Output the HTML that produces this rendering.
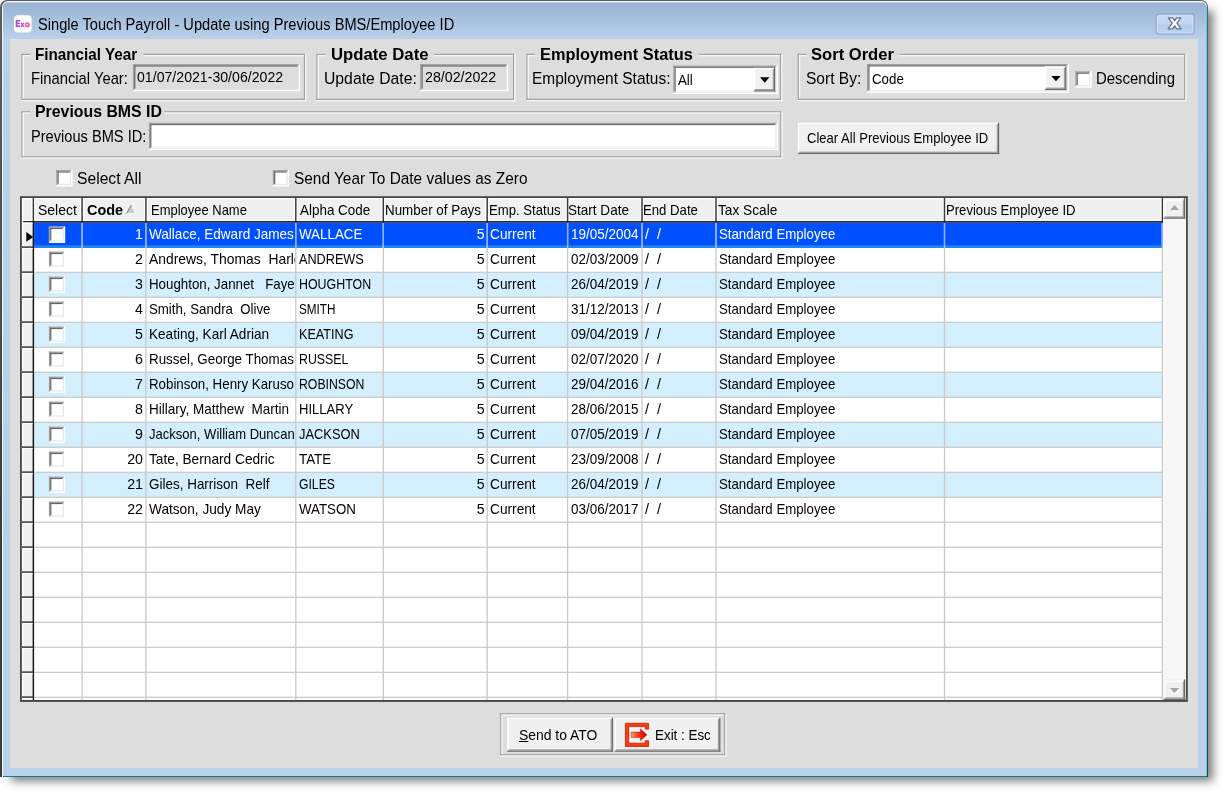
<!DOCTYPE html>
<html><head><meta charset="utf-8"><title>STP</title>
<style>
html,body{margin:0;padding:0;background:#fff;}
body{width:1227px;height:796px;overflow:hidden;position:relative;filter:blur(0.35px);font-family:"Liberation Sans",sans-serif;}
#win{position:absolute;left:0;top:0;width:1208px;height:777px;border-radius:7px 7px 0 0;background:linear-gradient(180deg,#5e5e5e 0,#3c3c3c 70%);box-shadow:8px 7px 10px -3px rgba(0,0,0,0.52);}
#frame{position:absolute;left:1.7px;top:1.1px;right:1.5px;bottom:0;border-radius:6px 6px 0 0;background:#f0f5fb;overflow:hidden;}
#frame i{position:absolute;display:block;}
#f-cr{right:0;top:3px;bottom:0;width:1px;background:#52d6f6;}
#f-cb{left:1.2px;right:0;bottom:0;height:1.3px;background:#52d6f6;border-bottom:1px solid #137c8c;}
#f-in{left:1.2px;top:1.3px;right:1px;bottom:1.2px;border-radius:5px 5px 0 0;background:linear-gradient(#d3e0f0 0,#98b3d3 1.6px,#b9d1ea 37px,#b9d1ea 100%);}
#art{position:absolute;left:0;top:0;}
.t{position:absolute;white-space:pre;line-height:1;color:#000;transform-origin:0 0;}

</style></head>
<body>
<div id="win"><div id="frame"><i id="f-cr"></i><i id="f-cb"></i><i id="f-in"></i></div></div>
<svg id="art" width="1227" height="796" viewBox="0 0 1227 796">
<defs>
<linearGradient id="gcap" x1="0" y1="0" x2="0" y2="1"><stop offset="0" stop-color="#98b3d3"/><stop offset="1" stop-color="#b9d1ea"/></linearGradient>
<linearGradient id="gx1" x1="0" y1="0" x2="0" y2="1"><stop offset="0" stop-color="#c9dcf3"/><stop offset="1" stop-color="#c0d6f0"/></linearGradient>
<linearGradient id="gx2" x1="0" y1="0" x2="0" y2="1"><stop offset="0" stop-color="#b3cbe9"/><stop offset="1" stop-color="#bdd4ee"/></linearGradient>
<linearGradient id="garrow" x1="0" y1="0" x2="1" y2="0"><stop offset="0" stop-color="#ff9a70"/><stop offset="0.45" stop-color="#f03810"/><stop offset="1" stop-color="#c00000"/></linearGradient>
<linearGradient id="gexo" x1="0" y1="0" x2="1" y2="0"><stop offset="0" stop-color="#9a3fc0"/><stop offset="1" stop-color="#ee1e9a"/></linearGradient>
</defs>
<rect x="10" y="39" width="1188" height="729" fill="#dddddd"/>
<rect x="14" y="15.2" width="17.6" height="17.4" rx="4" ry="4" fill="#ffffff"/>
<path d="M15.7 19.9 h4.5 v1.5 h-2.7 v1.3 h2.3 v1.4 h-2.3 v1.4 h2.8 v1.5 h-4.6 Z" fill="#a84fd0"/>
<path d="M21.0 22.9 L23.9 26.8 M23.9 22.9 L21.0 26.8" stroke="#cf43ba" stroke-width="1.25" fill="none"/>
<circle cx="27.3" cy="24.7" r="2.55" fill="#ee58ad"/>
<path d="M26.3 23.6 L28.6 24.7 L26.3 25.8 Z" fill="#ffffff"/>
<rect x="1155.6" y="13.6" width="39" height="21" rx="3" ry="3" fill="#8aa5c6"/>
<rect x="1156.7" y="14.7" width="36.8" height="18.8" rx="2" ry="2" fill="#d3e3f6"/>
<rect x="1157.7" y="15.7" width="34.8" height="8.6" fill="url(#gx1)"/>
<rect x="1157.7" y="24.3" width="34.8" height="8.3" fill="url(#gx2)"/>
<path d="M1168.3 17.9 L1172.6 17.9 L1174.6 20.7 L1176.6 17.9 L1180.9 17.9 L1176.9 23.2 L1181.1 28.8 L1176.7 28.8 L1174.6 25.8 L1172.5 28.8 L1168.1 28.8 L1172.3 23.2 Z" fill="#fbfcfe" stroke="#66758c" stroke-width="1.3" stroke-linejoin="round"/>
<rect x="21.4" y="53.8" width="1.25" height="46.2" fill="#a0a0a0"/>
<rect x="22.65" y="55.05" width="1.25" height="43.7" fill="#f8f8f8"/>
<rect x="21.4" y="98.75" width="283.7" height="1.25" fill="#a0a0a0"/>
<rect x="21.4" y="100" width="284.95" height="1.25" fill="#f8f8f8"/>
<rect x="303.85" y="53.8" width="1.25" height="46.2" fill="#a0a0a0"/>
<rect x="305.1" y="53.8" width="1.25" height="47.45" fill="#f8f8f8"/>
<rect x="21.4" y="53.8" width="283.7" height="1.25" fill="#a0a0a0"/>
<rect x="22.65" y="55.05" width="281.2" height="1.25" fill="#f8f8f8"/>
<rect x="30.1" y="53.3" width="113.5" height="3.5" fill="#dddddd"/>
<rect x="316.4" y="53.8" width="1.25" height="46.2" fill="#a0a0a0"/>
<rect x="317.65" y="55.05" width="1.25" height="43.7" fill="#f8f8f8"/>
<rect x="316.4" y="98.75" width="197.8" height="1.25" fill="#a0a0a0"/>
<rect x="316.4" y="100" width="199.05" height="1.25" fill="#f8f8f8"/>
<rect x="512.95" y="53.8" width="1.25" height="46.2" fill="#a0a0a0"/>
<rect x="514.2" y="53.8" width="1.25" height="47.45" fill="#f8f8f8"/>
<rect x="316.4" y="53.8" width="197.8" height="1.25" fill="#a0a0a0"/>
<rect x="317.65" y="55.05" width="195.3" height="1.25" fill="#f8f8f8"/>
<rect x="325.1" y="53.3" width="109.5" height="3.5" fill="#dddddd"/>
<rect x="526.4" y="53.8" width="1.25" height="46.2" fill="#a0a0a0"/>
<rect x="527.65" y="55.05" width="1.25" height="43.7" fill="#f8f8f8"/>
<rect x="526.4" y="98.75" width="254.8" height="1.25" fill="#a0a0a0"/>
<rect x="526.4" y="100" width="256.05" height="1.25" fill="#f8f8f8"/>
<rect x="779.95" y="53.8" width="1.25" height="46.2" fill="#a0a0a0"/>
<rect x="781.2" y="53.8" width="1.25" height="47.45" fill="#f8f8f8"/>
<rect x="526.4" y="53.8" width="254.8" height="1.25" fill="#a0a0a0"/>
<rect x="527.65" y="55.05" width="252.3" height="1.25" fill="#f8f8f8"/>
<rect x="535.1" y="53.3" width="164.1" height="3.5" fill="#dddddd"/>
<rect x="797.7" y="53.8" width="1.25" height="46.2" fill="#a0a0a0"/>
<rect x="798.95" y="55.05" width="1.25" height="43.7" fill="#f8f8f8"/>
<rect x="797.7" y="98.75" width="387.6" height="1.25" fill="#a0a0a0"/>
<rect x="797.7" y="100" width="388.85" height="1.25" fill="#f8f8f8"/>
<rect x="1184.05" y="53.8" width="1.25" height="46.2" fill="#a0a0a0"/>
<rect x="1185.3" y="53.8" width="1.25" height="47.45" fill="#f8f8f8"/>
<rect x="797.7" y="53.8" width="387.6" height="1.25" fill="#a0a0a0"/>
<rect x="798.95" y="55.05" width="385.1" height="1.25" fill="#f8f8f8"/>
<rect x="806.4" y="53.3" width="93.4" height="3.5" fill="#dddddd"/>
<rect x="21.4" y="111.2" width="1.25" height="46.3" fill="#a0a0a0"/>
<rect x="22.65" y="112.45" width="1.25" height="43.8" fill="#f8f8f8"/>
<rect x="21.4" y="156.25" width="760" height="1.25" fill="#a0a0a0"/>
<rect x="21.4" y="157.5" width="761.25" height="1.25" fill="#f8f8f8"/>
<rect x="780.15" y="111.2" width="1.25" height="46.3" fill="#a0a0a0"/>
<rect x="781.4" y="111.2" width="1.25" height="47.55" fill="#f8f8f8"/>
<rect x="21.4" y="111.2" width="760" height="1.25" fill="#a0a0a0"/>
<rect x="22.65" y="112.45" width="757.5" height="1.25" fill="#f8f8f8"/>
<rect x="30.1" y="110.7" width="133.9" height="3.5" fill="#dddddd"/>
<rect x="132.9" y="64.1" width="167.1" height="27.1" fill="#dddddd"/>
<rect x="132.9" y="89.95" width="167.1" height="1.25" fill="#ffffff"/>
<rect x="298.75" y="64.1" width="1.25" height="27.1" fill="#ffffff"/>
<rect x="134.15" y="88.7" width="164.6" height="1.25" fill="#e6e6e6"/>
<rect x="297.5" y="65.35" width="1.25" height="24.6" fill="#e6e6e6"/>
<rect x="132.9" y="64.1" width="165.85" height="1.25" fill="#a0a0a0"/>
<rect x="132.9" y="64.1" width="1.25" height="25.85" fill="#a0a0a0"/>
<rect x="134.15" y="65.35" width="163.35" height="1.25" fill="#6a6a6a"/>
<rect x="134.15" y="65.35" width="1.25" height="23.35" fill="#6a6a6a"/>
<rect x="420.2" y="64.1" width="88" height="27.1" fill="#dddddd"/>
<rect x="420.2" y="89.95" width="88" height="1.25" fill="#ffffff"/>
<rect x="506.95" y="64.1" width="1.25" height="27.1" fill="#ffffff"/>
<rect x="421.45" y="88.7" width="85.5" height="1.25" fill="#e6e6e6"/>
<rect x="505.7" y="65.35" width="1.25" height="24.6" fill="#e6e6e6"/>
<rect x="420.2" y="64.1" width="86.75" height="1.25" fill="#a0a0a0"/>
<rect x="420.2" y="64.1" width="1.25" height="25.85" fill="#a0a0a0"/>
<rect x="421.45" y="65.35" width="84.25" height="1.25" fill="#6a6a6a"/>
<rect x="421.45" y="65.35" width="1.25" height="23.35" fill="#6a6a6a"/>
<rect x="148.9" y="122.6" width="629" height="27.4" fill="#ffffff"/>
<rect x="148.9" y="148.75" width="629" height="1.25" fill="#ffffff"/>
<rect x="776.65" y="122.6" width="1.25" height="27.4" fill="#ffffff"/>
<rect x="150.15" y="147.5" width="626.5" height="1.25" fill="#e6e6e6"/>
<rect x="775.4" y="123.85" width="1.25" height="24.9" fill="#e6e6e6"/>
<rect x="148.9" y="122.6" width="627.75" height="1.25" fill="#a0a0a0"/>
<rect x="148.9" y="122.6" width="1.25" height="26.15" fill="#a0a0a0"/>
<rect x="150.15" y="123.85" width="625.25" height="1.25" fill="#6a6a6a"/>
<rect x="150.15" y="123.85" width="1.25" height="23.65" fill="#6a6a6a"/>
<rect x="673.2" y="65.4" width="104.5" height="28.6" fill="#ffffff"/>
<rect x="673.2" y="92.75" width="104.5" height="1.25" fill="#ffffff"/>
<rect x="776.45" y="65.4" width="1.25" height="28.6" fill="#ffffff"/>
<rect x="674.45" y="91.5" width="102" height="1.25" fill="#e6e6e6"/>
<rect x="775.2" y="66.65" width="1.25" height="26.1" fill="#e6e6e6"/>
<rect x="673.2" y="65.4" width="103.25" height="1.25" fill="#a0a0a0"/>
<rect x="673.2" y="65.4" width="1.25" height="27.35" fill="#a0a0a0"/>
<rect x="674.45" y="66.65" width="100.75" height="1.25" fill="#6a6a6a"/>
<rect x="674.45" y="66.65" width="1.25" height="24.85" fill="#6a6a6a"/>
<rect x="753.9" y="67.9" width="21.3" height="23.6" fill="#f0f0f0"/>
<rect x="753.9" y="67.9" width="20.05" height="1.25" fill="#ffffff"/>
<rect x="753.9" y="67.9" width="1.25" height="22.35" fill="#ffffff"/>
<rect x="755.15" y="89" width="18.8" height="1.25" fill="#a0a0a0"/>
<rect x="772.7" y="69.15" width="1.25" height="21.1" fill="#a0a0a0"/>
<rect x="753.9" y="90.25" width="21.3" height="1.25" fill="#6a6a6a"/>
<rect x="773.95" y="67.9" width="1.25" height="23.6" fill="#6a6a6a"/>
<path d="M760.05 77.3 L769.45 77.3 L764.75 82.7Z" fill="#000"/>
<rect x="867" y="64" width="201.9" height="28.6" fill="#ffffff"/>
<rect x="867" y="91.35" width="201.9" height="1.25" fill="#ffffff"/>
<rect x="1067.65" y="64" width="1.25" height="28.6" fill="#ffffff"/>
<rect x="868.25" y="90.1" width="199.4" height="1.25" fill="#e6e6e6"/>
<rect x="1066.4" y="65.25" width="1.25" height="26.1" fill="#e6e6e6"/>
<rect x="867" y="64" width="200.65" height="1.25" fill="#a0a0a0"/>
<rect x="867" y="64" width="1.25" height="27.35" fill="#a0a0a0"/>
<rect x="868.25" y="65.25" width="198.15" height="1.25" fill="#6a6a6a"/>
<rect x="868.25" y="65.25" width="1.25" height="24.85" fill="#6a6a6a"/>
<rect x="1045.1" y="66.5" width="21.3" height="23.6" fill="#f0f0f0"/>
<rect x="1045.1" y="66.5" width="20.05" height="1.25" fill="#ffffff"/>
<rect x="1045.1" y="66.5" width="1.25" height="22.35" fill="#ffffff"/>
<rect x="1046.35" y="87.6" width="18.8" height="1.25" fill="#a0a0a0"/>
<rect x="1063.9" y="67.75" width="1.25" height="21.1" fill="#a0a0a0"/>
<rect x="1045.1" y="88.85" width="21.3" height="1.25" fill="#6a6a6a"/>
<rect x="1065.15" y="66.5" width="1.25" height="23.6" fill="#6a6a6a"/>
<path d="M1051.25 75.9 L1060.65 75.9 L1055.95 81.3Z" fill="#000"/>
<rect x="1075.3" y="71.3" width="16.2" height="16.2" fill="#ffffff"/>
<rect x="1075.3" y="86.25" width="16.2" height="1.25" fill="#ffffff"/>
<rect x="1090.25" y="71.3" width="1.25" height="16.2" fill="#ffffff"/>
<rect x="1076.55" y="85" width="13.7" height="1.25" fill="#e8e8e8"/>
<rect x="1089" y="72.55" width="1.25" height="13.7" fill="#e8e8e8"/>
<rect x="1075.3" y="71.3" width="14.95" height="1.25" fill="#9c9c9c"/>
<rect x="1075.3" y="71.3" width="1.25" height="14.95" fill="#9c9c9c"/>
<rect x="1076.55" y="72.55" width="12.45" height="1.25" fill="#686868"/>
<rect x="1076.55" y="72.55" width="1.25" height="12.45" fill="#686868"/>
<rect x="56.2" y="170.1" width="16.2" height="16.2" fill="#ffffff"/>
<rect x="56.2" y="185.05" width="16.2" height="1.25" fill="#ffffff"/>
<rect x="71.15" y="170.1" width="1.25" height="16.2" fill="#ffffff"/>
<rect x="57.45" y="183.8" width="13.7" height="1.25" fill="#e8e8e8"/>
<rect x="69.9" y="171.35" width="1.25" height="13.7" fill="#e8e8e8"/>
<rect x="56.2" y="170.1" width="14.95" height="1.25" fill="#9c9c9c"/>
<rect x="56.2" y="170.1" width="1.25" height="14.95" fill="#9c9c9c"/>
<rect x="57.45" y="171.35" width="12.45" height="1.25" fill="#686868"/>
<rect x="57.45" y="171.35" width="1.25" height="12.45" fill="#686868"/>
<rect x="272.8" y="170.1" width="16.2" height="16.2" fill="#ffffff"/>
<rect x="272.8" y="185.05" width="16.2" height="1.25" fill="#ffffff"/>
<rect x="287.75" y="170.1" width="1.25" height="16.2" fill="#ffffff"/>
<rect x="274.05" y="183.8" width="13.7" height="1.25" fill="#e8e8e8"/>
<rect x="286.5" y="171.35" width="1.25" height="13.7" fill="#e8e8e8"/>
<rect x="272.8" y="170.1" width="14.95" height="1.25" fill="#9c9c9c"/>
<rect x="272.8" y="170.1" width="1.25" height="14.95" fill="#9c9c9c"/>
<rect x="274.05" y="171.35" width="12.45" height="1.25" fill="#686868"/>
<rect x="274.05" y="171.35" width="1.25" height="12.45" fill="#686868"/>
<rect x="797.9" y="122.8" width="201.3" height="31.3" fill="#f0f0f0"/>
<rect x="797.9" y="122.8" width="200.05" height="1.25" fill="#ffffff"/>
<rect x="797.9" y="122.8" width="1.25" height="30.05" fill="#ffffff"/>
<rect x="799.15" y="151.6" width="198.8" height="1.25" fill="#a0a0a0"/>
<rect x="996.7" y="124.05" width="1.25" height="28.8" fill="#a0a0a0"/>
<rect x="797.9" y="152.85" width="201.3" height="1.25" fill="#6a6a6a"/>
<rect x="997.95" y="122.8" width="1.25" height="31.3" fill="#6a6a6a"/>
<rect x="500.2" y="713.2" width="1.25" height="42.2" fill="#a0a0a0"/>
<rect x="501.45" y="714.45" width="1.25" height="39.7" fill="#f8f8f8"/>
<rect x="500.2" y="754.15" width="225.1" height="1.25" fill="#a0a0a0"/>
<rect x="500.2" y="755.4" width="226.35" height="1.25" fill="#f8f8f8"/>
<rect x="724.05" y="713.2" width="1.25" height="42.2" fill="#a0a0a0"/>
<rect x="725.3" y="713.2" width="1.25" height="43.45" fill="#f8f8f8"/>
<rect x="500.2" y="713.2" width="225.1" height="1.25" fill="#a0a0a0"/>
<rect x="501.45" y="714.45" width="222.6" height="1.25" fill="#f8f8f8"/>
<rect x="507.3" y="717.8" width="105.7" height="34" fill="#f0f0f0"/>
<rect x="507.3" y="717.8" width="104.45" height="1.25" fill="#ffffff"/>
<rect x="507.3" y="717.8" width="1.25" height="32.75" fill="#ffffff"/>
<rect x="508.55" y="749.3" width="103.2" height="1.25" fill="#a0a0a0"/>
<rect x="610.5" y="719.05" width="1.25" height="31.5" fill="#a0a0a0"/>
<rect x="507.3" y="750.55" width="105.7" height="1.25" fill="#6a6a6a"/>
<rect x="611.75" y="717.8" width="1.25" height="34" fill="#6a6a6a"/>
<rect x="614.7" y="717.8" width="105.7" height="34" fill="#f0f0f0"/>
<rect x="614.7" y="717.8" width="104.45" height="1.25" fill="#ffffff"/>
<rect x="614.7" y="717.8" width="1.25" height="32.75" fill="#ffffff"/>
<rect x="615.95" y="749.3" width="103.2" height="1.25" fill="#a0a0a0"/>
<rect x="717.9" y="719.05" width="1.25" height="31.5" fill="#a0a0a0"/>
<rect x="614.7" y="750.55" width="105.7" height="1.25" fill="#6a6a6a"/>
<rect x="719.15" y="717.8" width="1.25" height="34" fill="#6a6a6a"/>
<rect x="628" y="725.9" width="18" height="18" fill="#ebf5f5"/>
<path d="M625.4 723.3 h23.2 v5.8 h-3.3 v-2.5 h-16.6 v16.6 h16.6 v-2.5 h3.3 v5.8 h-23.2 Z" fill="#f4400c" stroke="#d41400" stroke-width="0.8"/>
<path d="M631.2 732 h9.2 v-3.2 l6.6 6.0 l-6.6 6.0 v-3.2 h-9.2 Z" fill="url(#garrow)" stroke="#d01800" stroke-width="0.5"/>
<rect x="20" y="196.2" width="1167.8" height="505.7" fill="#484848"/>
<rect x="21.95" y="198.15" width="1163.9" height="501.8" fill="#ffffff"/>
<rect x="34.1" y="222.6" width="1127.65" height="25" fill="#0050ff"/>
<rect x="34.1" y="272.6" width="1127.65" height="25" fill="#d3effd"/>
<rect x="34.1" y="322.6" width="1127.65" height="25" fill="#d3effd"/>
<rect x="34.1" y="372.6" width="1127.65" height="25" fill="#d3effd"/>
<rect x="34.1" y="422.6" width="1127.65" height="25" fill="#d3effd"/>
<rect x="34.1" y="472.6" width="1127.65" height="25" fill="#d3effd"/>
<rect x="34.1" y="245.3" width="1128.95" height="2.65" fill="#1f86ee"/>
<rect x="34.1" y="271.65" width="1128.95" height="1.3" fill="#cbcbcb"/>
<rect x="34.1" y="296.65" width="1128.95" height="1.3" fill="#cbcbcb"/>
<rect x="34.1" y="321.65" width="1128.95" height="1.3" fill="#cbcbcb"/>
<rect x="34.1" y="346.65" width="1128.95" height="1.3" fill="#cbcbcb"/>
<rect x="34.1" y="371.65" width="1128.95" height="1.3" fill="#cbcbcb"/>
<rect x="34.1" y="396.65" width="1128.95" height="1.3" fill="#cbcbcb"/>
<rect x="34.1" y="421.65" width="1128.95" height="1.3" fill="#cbcbcb"/>
<rect x="34.1" y="446.65" width="1128.95" height="1.3" fill="#cbcbcb"/>
<rect x="34.1" y="471.65" width="1128.95" height="1.3" fill="#cbcbcb"/>
<rect x="34.1" y="496.65" width="1128.95" height="1.3" fill="#cbcbcb"/>
<rect x="34.1" y="521.65" width="1128.95" height="1.3" fill="#cbcbcb"/>
<rect x="34.1" y="546.65" width="1128.95" height="1.3" fill="#cbcbcb"/>
<rect x="34.1" y="571.65" width="1128.95" height="1.3" fill="#cbcbcb"/>
<rect x="34.1" y="596.65" width="1128.95" height="1.3" fill="#cbcbcb"/>
<rect x="34.1" y="621.65" width="1128.95" height="1.3" fill="#cbcbcb"/>
<rect x="34.1" y="646.65" width="1128.95" height="1.3" fill="#cbcbcb"/>
<rect x="34.1" y="671.65" width="1128.95" height="1.3" fill="#cbcbcb"/>
<rect x="34.1" y="696.65" width="1128.95" height="1.3" fill="#cbcbcb"/>
<rect x="81.45" y="222.6" width="1.3" height="477.35" fill="#c9c9c9"/>
<rect x="81.45" y="222.6" width="1.3" height="23.8" fill="#8fb0f2"/>
<rect x="145.25" y="222.6" width="1.3" height="477.35" fill="#c9c9c9"/>
<rect x="145.25" y="222.6" width="1.3" height="23.8" fill="#8fb0f2"/>
<rect x="295.15" y="222.6" width="1.3" height="477.35" fill="#c9c9c9"/>
<rect x="295.15" y="222.6" width="1.3" height="23.8" fill="#8fb0f2"/>
<rect x="382.65" y="222.6" width="1.3" height="477.35" fill="#c9c9c9"/>
<rect x="382.65" y="222.6" width="1.3" height="23.8" fill="#8fb0f2"/>
<rect x="486.55" y="222.6" width="1.3" height="477.35" fill="#c9c9c9"/>
<rect x="486.55" y="222.6" width="1.3" height="23.8" fill="#8fb0f2"/>
<rect x="566.95" y="222.6" width="1.3" height="477.35" fill="#c9c9c9"/>
<rect x="566.95" y="222.6" width="1.3" height="23.8" fill="#8fb0f2"/>
<rect x="641.35" y="222.6" width="1.3" height="477.35" fill="#c9c9c9"/>
<rect x="641.35" y="222.6" width="1.3" height="23.8" fill="#8fb0f2"/>
<rect x="715.35" y="222.6" width="1.3" height="477.35" fill="#c9c9c9"/>
<rect x="715.35" y="222.6" width="1.3" height="23.8" fill="#8fb0f2"/>
<rect x="943.85" y="222.6" width="1.3" height="477.35" fill="#c9c9c9"/>
<rect x="943.85" y="222.6" width="1.3" height="23.8" fill="#8fb0f2"/>
<rect x="1161.75" y="222.6" width="1.3" height="477.35" fill="#c9c9c9"/>
<rect x="1161.75" y="222.6" width="1.3" height="23.8" fill="#8fb0f2"/>
<rect x="21.95" y="198.15" width="1140.45" height="22.95" fill="#f0f0f0"/>
<rect x="21.95" y="198.15" width="1140.45" height="1.3" fill="#ffffff"/>
<rect x="21.95" y="220.1" width="1140.45" height="1" fill="#fbfbfb"/>
<rect x="31.4" y="198.15" width="4" height="22.95" fill="#ffffff"/>
<rect x="32.6" y="197.85" width="1.5" height="24.75" fill="#3c3c3c"/>
<rect x="80.15" y="198.15" width="4" height="22.95" fill="#ffffff"/>
<rect x="81.35" y="197.85" width="1.5" height="24.75" fill="#3c3c3c"/>
<rect x="143.95" y="198.15" width="4" height="22.95" fill="#ffffff"/>
<rect x="145.15" y="197.85" width="1.5" height="24.75" fill="#3c3c3c"/>
<rect x="293.85" y="198.15" width="4" height="22.95" fill="#ffffff"/>
<rect x="295.05" y="197.85" width="1.5" height="24.75" fill="#3c3c3c"/>
<rect x="381.35" y="198.15" width="4" height="22.95" fill="#ffffff"/>
<rect x="382.55" y="197.85" width="1.5" height="24.75" fill="#3c3c3c"/>
<rect x="485.25" y="198.15" width="4" height="22.95" fill="#ffffff"/>
<rect x="486.45" y="197.85" width="1.5" height="24.75" fill="#3c3c3c"/>
<rect x="565.65" y="198.15" width="4" height="22.95" fill="#ffffff"/>
<rect x="566.85" y="197.85" width="1.5" height="24.75" fill="#3c3c3c"/>
<rect x="640.05" y="198.15" width="4" height="22.95" fill="#ffffff"/>
<rect x="641.25" y="197.85" width="1.5" height="24.75" fill="#3c3c3c"/>
<rect x="714.05" y="198.15" width="4" height="22.95" fill="#ffffff"/>
<rect x="715.25" y="197.85" width="1.5" height="24.75" fill="#3c3c3c"/>
<rect x="942.55" y="198.15" width="4" height="22.95" fill="#ffffff"/>
<rect x="943.75" y="197.85" width="1.5" height="24.75" fill="#3c3c3c"/>
<rect x="1160.45" y="198.15" width="4" height="22.95" fill="#ffffff"/>
<rect x="1161.65" y="197.85" width="1.5" height="24.75" fill="#3c3c3c"/>
<rect x="21.95" y="221.1" width="1141.2" height="1.5" fill="#141414"/>
<rect x="21.95" y="222.6" width="10.65" height="477.35" fill="#f0f0f0"/>
<rect x="21.95" y="198.15" width="1.2" height="501.8" fill="#ffffff"/>
<rect x="32.6" y="221.1" width="1.5" height="478.85" fill="#141414"/>
<rect x="21.95" y="246.4" width="11.4" height="1.5" fill="#2e2e2e"/>
<rect x="21.95" y="247.9" width="10.65" height="1.2" fill="#ffffff"/>
<rect x="21.95" y="271.4" width="11.4" height="1.5" fill="#2e2e2e"/>
<rect x="21.95" y="272.9" width="10.65" height="1.2" fill="#ffffff"/>
<rect x="21.95" y="296.4" width="11.4" height="1.5" fill="#2e2e2e"/>
<rect x="21.95" y="297.9" width="10.65" height="1.2" fill="#ffffff"/>
<rect x="21.95" y="321.4" width="11.4" height="1.5" fill="#2e2e2e"/>
<rect x="21.95" y="322.9" width="10.65" height="1.2" fill="#ffffff"/>
<rect x="21.95" y="346.4" width="11.4" height="1.5" fill="#2e2e2e"/>
<rect x="21.95" y="347.9" width="10.65" height="1.2" fill="#ffffff"/>
<rect x="21.95" y="371.4" width="11.4" height="1.5" fill="#2e2e2e"/>
<rect x="21.95" y="372.9" width="10.65" height="1.2" fill="#ffffff"/>
<rect x="21.95" y="396.4" width="11.4" height="1.5" fill="#2e2e2e"/>
<rect x="21.95" y="397.9" width="10.65" height="1.2" fill="#ffffff"/>
<rect x="21.95" y="421.4" width="11.4" height="1.5" fill="#2e2e2e"/>
<rect x="21.95" y="422.9" width="10.65" height="1.2" fill="#ffffff"/>
<rect x="21.95" y="446.4" width="11.4" height="1.5" fill="#2e2e2e"/>
<rect x="21.95" y="447.9" width="10.65" height="1.2" fill="#ffffff"/>
<rect x="21.95" y="471.4" width="11.4" height="1.5" fill="#2e2e2e"/>
<rect x="21.95" y="472.9" width="10.65" height="1.2" fill="#ffffff"/>
<rect x="21.95" y="496.4" width="11.4" height="1.5" fill="#2e2e2e"/>
<rect x="21.95" y="497.9" width="10.65" height="1.2" fill="#ffffff"/>
<rect x="21.95" y="521.4" width="11.4" height="1.5" fill="#2e2e2e"/>
<rect x="21.95" y="522.9" width="10.65" height="1.2" fill="#ffffff"/>
<rect x="21.95" y="546.4" width="11.4" height="1.5" fill="#2e2e2e"/>
<rect x="21.95" y="547.9" width="10.65" height="1.2" fill="#ffffff"/>
<rect x="21.95" y="571.4" width="11.4" height="1.5" fill="#2e2e2e"/>
<rect x="21.95" y="572.9" width="10.65" height="1.2" fill="#ffffff"/>
<rect x="21.95" y="596.4" width="11.4" height="1.5" fill="#2e2e2e"/>
<rect x="21.95" y="597.9" width="10.65" height="1.2" fill="#ffffff"/>
<rect x="21.95" y="621.4" width="11.4" height="1.5" fill="#2e2e2e"/>
<rect x="21.95" y="622.9" width="10.65" height="1.2" fill="#ffffff"/>
<rect x="21.95" y="646.4" width="11.4" height="1.5" fill="#2e2e2e"/>
<rect x="21.95" y="647.9" width="10.65" height="1.2" fill="#ffffff"/>
<rect x="21.95" y="671.4" width="11.4" height="1.5" fill="#2e2e2e"/>
<rect x="21.95" y="672.9" width="10.65" height="1.2" fill="#ffffff"/>
<rect x="21.95" y="696.4" width="11.4" height="1.5" fill="#2e2e2e"/>
<rect x="21.95" y="697.9" width="10.65" height="1.2" fill="#ffffff"/>
<rect x="21.95" y="222.6" width="10.65" height="1.2" fill="#ffffff"/>
<path d="M26.3 232.0 L33.2 236.9 L26.3 241.8 Z" fill="#000"/>
<path d="M126.2 213.4 L130.9 205.0 L135.0 213.4 Z" fill="#cdcdcd"/>
<path d="M126.0 213.6 L130.6 205.0 L131.6 205.4 L127.2 213.6 Z" fill="#8c8c8c"/>
<rect x="127" y="213.2" width="8.4" height="1" fill="#fafafa"/>
<rect x="48.9" y="226.6" width="16.2" height="16.2" fill="#ffffff"/>
<rect x="48.9" y="241.55" width="16.2" height="1.25" fill="#ffffff"/>
<rect x="63.85" y="226.6" width="1.25" height="16.2" fill="#ffffff"/>
<rect x="50.15" y="240.3" width="13.7" height="1.25" fill="#e8e8e8"/>
<rect x="62.6" y="227.85" width="1.25" height="13.7" fill="#e8e8e8"/>
<rect x="48.9" y="226.6" width="14.95" height="1.25" fill="#9c9c9c"/>
<rect x="48.9" y="226.6" width="1.25" height="14.95" fill="#9c9c9c"/>
<rect x="50.15" y="227.85" width="12.45" height="1.25" fill="#686868"/>
<rect x="50.15" y="227.85" width="1.25" height="12.45" fill="#686868"/>
<rect x="48.9" y="251.6" width="16.2" height="16.2" fill="#ffffff"/>
<rect x="48.9" y="266.55" width="16.2" height="1.25" fill="#ffffff"/>
<rect x="63.85" y="251.6" width="1.25" height="16.2" fill="#ffffff"/>
<rect x="50.15" y="265.3" width="13.7" height="1.25" fill="#e8e8e8"/>
<rect x="62.6" y="252.85" width="1.25" height="13.7" fill="#e8e8e8"/>
<rect x="48.9" y="251.6" width="14.95" height="1.25" fill="#9c9c9c"/>
<rect x="48.9" y="251.6" width="1.25" height="14.95" fill="#9c9c9c"/>
<rect x="50.15" y="252.85" width="12.45" height="1.25" fill="#686868"/>
<rect x="50.15" y="252.85" width="1.25" height="12.45" fill="#686868"/>
<rect x="48.9" y="276.6" width="16.2" height="16.2" fill="#ffffff"/>
<rect x="48.9" y="291.55" width="16.2" height="1.25" fill="#ffffff"/>
<rect x="63.85" y="276.6" width="1.25" height="16.2" fill="#ffffff"/>
<rect x="50.15" y="290.3" width="13.7" height="1.25" fill="#e8e8e8"/>
<rect x="62.6" y="277.85" width="1.25" height="13.7" fill="#e8e8e8"/>
<rect x="48.9" y="276.6" width="14.95" height="1.25" fill="#9c9c9c"/>
<rect x="48.9" y="276.6" width="1.25" height="14.95" fill="#9c9c9c"/>
<rect x="50.15" y="277.85" width="12.45" height="1.25" fill="#686868"/>
<rect x="50.15" y="277.85" width="1.25" height="12.45" fill="#686868"/>
<rect x="48.9" y="301.6" width="16.2" height="16.2" fill="#ffffff"/>
<rect x="48.9" y="316.55" width="16.2" height="1.25" fill="#ffffff"/>
<rect x="63.85" y="301.6" width="1.25" height="16.2" fill="#ffffff"/>
<rect x="50.15" y="315.3" width="13.7" height="1.25" fill="#e8e8e8"/>
<rect x="62.6" y="302.85" width="1.25" height="13.7" fill="#e8e8e8"/>
<rect x="48.9" y="301.6" width="14.95" height="1.25" fill="#9c9c9c"/>
<rect x="48.9" y="301.6" width="1.25" height="14.95" fill="#9c9c9c"/>
<rect x="50.15" y="302.85" width="12.45" height="1.25" fill="#686868"/>
<rect x="50.15" y="302.85" width="1.25" height="12.45" fill="#686868"/>
<rect x="48.9" y="326.6" width="16.2" height="16.2" fill="#ffffff"/>
<rect x="48.9" y="341.55" width="16.2" height="1.25" fill="#ffffff"/>
<rect x="63.85" y="326.6" width="1.25" height="16.2" fill="#ffffff"/>
<rect x="50.15" y="340.3" width="13.7" height="1.25" fill="#e8e8e8"/>
<rect x="62.6" y="327.85" width="1.25" height="13.7" fill="#e8e8e8"/>
<rect x="48.9" y="326.6" width="14.95" height="1.25" fill="#9c9c9c"/>
<rect x="48.9" y="326.6" width="1.25" height="14.95" fill="#9c9c9c"/>
<rect x="50.15" y="327.85" width="12.45" height="1.25" fill="#686868"/>
<rect x="50.15" y="327.85" width="1.25" height="12.45" fill="#686868"/>
<rect x="48.9" y="351.6" width="16.2" height="16.2" fill="#ffffff"/>
<rect x="48.9" y="366.55" width="16.2" height="1.25" fill="#ffffff"/>
<rect x="63.85" y="351.6" width="1.25" height="16.2" fill="#ffffff"/>
<rect x="50.15" y="365.3" width="13.7" height="1.25" fill="#e8e8e8"/>
<rect x="62.6" y="352.85" width="1.25" height="13.7" fill="#e8e8e8"/>
<rect x="48.9" y="351.6" width="14.95" height="1.25" fill="#9c9c9c"/>
<rect x="48.9" y="351.6" width="1.25" height="14.95" fill="#9c9c9c"/>
<rect x="50.15" y="352.85" width="12.45" height="1.25" fill="#686868"/>
<rect x="50.15" y="352.85" width="1.25" height="12.45" fill="#686868"/>
<rect x="48.9" y="376.6" width="16.2" height="16.2" fill="#ffffff"/>
<rect x="48.9" y="391.55" width="16.2" height="1.25" fill="#ffffff"/>
<rect x="63.85" y="376.6" width="1.25" height="16.2" fill="#ffffff"/>
<rect x="50.15" y="390.3" width="13.7" height="1.25" fill="#e8e8e8"/>
<rect x="62.6" y="377.85" width="1.25" height="13.7" fill="#e8e8e8"/>
<rect x="48.9" y="376.6" width="14.95" height="1.25" fill="#9c9c9c"/>
<rect x="48.9" y="376.6" width="1.25" height="14.95" fill="#9c9c9c"/>
<rect x="50.15" y="377.85" width="12.45" height="1.25" fill="#686868"/>
<rect x="50.15" y="377.85" width="1.25" height="12.45" fill="#686868"/>
<rect x="48.9" y="401.6" width="16.2" height="16.2" fill="#ffffff"/>
<rect x="48.9" y="416.55" width="16.2" height="1.25" fill="#ffffff"/>
<rect x="63.85" y="401.6" width="1.25" height="16.2" fill="#ffffff"/>
<rect x="50.15" y="415.3" width="13.7" height="1.25" fill="#e8e8e8"/>
<rect x="62.6" y="402.85" width="1.25" height="13.7" fill="#e8e8e8"/>
<rect x="48.9" y="401.6" width="14.95" height="1.25" fill="#9c9c9c"/>
<rect x="48.9" y="401.6" width="1.25" height="14.95" fill="#9c9c9c"/>
<rect x="50.15" y="402.85" width="12.45" height="1.25" fill="#686868"/>
<rect x="50.15" y="402.85" width="1.25" height="12.45" fill="#686868"/>
<rect x="48.9" y="426.6" width="16.2" height="16.2" fill="#ffffff"/>
<rect x="48.9" y="441.55" width="16.2" height="1.25" fill="#ffffff"/>
<rect x="63.85" y="426.6" width="1.25" height="16.2" fill="#ffffff"/>
<rect x="50.15" y="440.3" width="13.7" height="1.25" fill="#e8e8e8"/>
<rect x="62.6" y="427.85" width="1.25" height="13.7" fill="#e8e8e8"/>
<rect x="48.9" y="426.6" width="14.95" height="1.25" fill="#9c9c9c"/>
<rect x="48.9" y="426.6" width="1.25" height="14.95" fill="#9c9c9c"/>
<rect x="50.15" y="427.85" width="12.45" height="1.25" fill="#686868"/>
<rect x="50.15" y="427.85" width="1.25" height="12.45" fill="#686868"/>
<rect x="48.9" y="451.6" width="16.2" height="16.2" fill="#ffffff"/>
<rect x="48.9" y="466.55" width="16.2" height="1.25" fill="#ffffff"/>
<rect x="63.85" y="451.6" width="1.25" height="16.2" fill="#ffffff"/>
<rect x="50.15" y="465.3" width="13.7" height="1.25" fill="#e8e8e8"/>
<rect x="62.6" y="452.85" width="1.25" height="13.7" fill="#e8e8e8"/>
<rect x="48.9" y="451.6" width="14.95" height="1.25" fill="#9c9c9c"/>
<rect x="48.9" y="451.6" width="1.25" height="14.95" fill="#9c9c9c"/>
<rect x="50.15" y="452.85" width="12.45" height="1.25" fill="#686868"/>
<rect x="50.15" y="452.85" width="1.25" height="12.45" fill="#686868"/>
<rect x="48.9" y="476.6" width="16.2" height="16.2" fill="#ffffff"/>
<rect x="48.9" y="491.55" width="16.2" height="1.25" fill="#ffffff"/>
<rect x="63.85" y="476.6" width="1.25" height="16.2" fill="#ffffff"/>
<rect x="50.15" y="490.3" width="13.7" height="1.25" fill="#e8e8e8"/>
<rect x="62.6" y="477.85" width="1.25" height="13.7" fill="#e8e8e8"/>
<rect x="48.9" y="476.6" width="14.95" height="1.25" fill="#9c9c9c"/>
<rect x="48.9" y="476.6" width="1.25" height="14.95" fill="#9c9c9c"/>
<rect x="50.15" y="477.85" width="12.45" height="1.25" fill="#686868"/>
<rect x="50.15" y="477.85" width="1.25" height="12.45" fill="#686868"/>
<rect x="48.9" y="501.6" width="16.2" height="16.2" fill="#ffffff"/>
<rect x="48.9" y="516.55" width="16.2" height="1.25" fill="#ffffff"/>
<rect x="63.85" y="501.6" width="1.25" height="16.2" fill="#ffffff"/>
<rect x="50.15" y="515.3" width="13.7" height="1.25" fill="#e8e8e8"/>
<rect x="62.6" y="502.85" width="1.25" height="13.7" fill="#e8e8e8"/>
<rect x="48.9" y="501.6" width="14.95" height="1.25" fill="#9c9c9c"/>
<rect x="48.9" y="501.6" width="1.25" height="14.95" fill="#9c9c9c"/>
<rect x="50.15" y="502.85" width="12.45" height="1.25" fill="#686868"/>
<rect x="50.15" y="502.85" width="1.25" height="12.45" fill="#686868"/>
<rect x="1163.15" y="198.15" width="22.7" height="501.8" fill="#f7f7f7"/>
<rect x="1163.65" y="198.15" width="21.6" height="20.65" fill="#f0f0f0"/>
<rect x="1163.65" y="198.15" width="20.35" height="1.25" fill="#f0f0f0"/>
<rect x="1163.65" y="198.15" width="1.25" height="19.4" fill="#f0f0f0"/>
<rect x="1164.9" y="216.3" width="19.1" height="1.25" fill="#a0a0a0"/>
<rect x="1182.75" y="199.4" width="1.25" height="18.15" fill="#a0a0a0"/>
<rect x="1163.65" y="217.55" width="21.6" height="1.25" fill="#6a6a6a"/>
<rect x="1184" y="198.15" width="1.25" height="20.65" fill="#6a6a6a"/>
<rect x="1164.4" y="199.4" width="18.95" height="1.25" fill="#ffffff"/>
<rect x="1164.4" y="199.4" width="1.25" height="16.9" fill="#ffffff"/>
<rect x="1163.65" y="679.4" width="21.6" height="20.55" fill="#f0f0f0"/>
<rect x="1163.65" y="679.4" width="20.35" height="1.25" fill="#f0f0f0"/>
<rect x="1163.65" y="679.4" width="1.25" height="19.3" fill="#f0f0f0"/>
<rect x="1164.9" y="697.45" width="19.1" height="1.25" fill="#a0a0a0"/>
<rect x="1182.75" y="680.65" width="1.25" height="18.05" fill="#a0a0a0"/>
<rect x="1163.65" y="698.7" width="21.6" height="1.25" fill="#6a6a6a"/>
<rect x="1184" y="679.4" width="1.25" height="20.55" fill="#6a6a6a"/>
<rect x="1164.4" y="680.65" width="18.95" height="1.25" fill="#ffffff"/>
<rect x="1164.4" y="680.65" width="1.25" height="16.8" fill="#ffffff"/>
<path d="M1171 211.3 L1180.4 211.3 L1175.7 206.1Z" fill="#ffffff"/>
<path d="M1169.9 210.2 L1179.3 210.2 L1174.6 205Z" fill="#a6a6a6"/>
<path d="M1171 689 L1180.4 689 L1175.7 694.2Z" fill="#ffffff"/>
<path d="M1169.9 687.9 L1179.3 687.9 L1174.6 693.1Z" fill="#a6a6a6"/>
</svg>
<span class="t" id="t0" style="top:17.23px;font-size:15.8px;left:37.84px;transform:scaleX(0.9264);">Single Touch Payroll - Update using Previous BMS/Employee ID</span>
<span class="t" id="t1" style="top:47.01px;font-size:15.7px;left:34.61px;font-weight:bold;transform:scaleX(0.9703);">Financial Year</span>
<span class="t" id="t2" style="top:47.01px;font-size:15.7px;left:331.15px;font-weight:bold;transform:scaleX(1.0654);">Update Date</span>
<span class="t" id="t3" style="top:47.01px;font-size:15.7px;left:539.86px;font-weight:bold;transform:scaleX(1.0434);">Employment Status</span>
<span class="t" id="t4" style="top:47.01px;font-size:15.7px;left:810.75px;font-weight:bold;transform:scaleX(1.0568);">Sort Order</span>
<span class="t" id="t5" style="top:104.11px;font-size:15.7px;left:35.29px;font-weight:bold;transform:scaleX(1.0110);">Previous BMS ID</span>
<span class="t" id="t6" style="top:70.20px;font-size:16.3px;left:31.33px;transform:scaleX(0.9069);">Financial Year:</span>
<span class="t" id="t7" style="top:70.20px;font-size:16.3px;left:323.79px;transform:scaleX(0.9668);">Update Date:</span>
<span class="t" id="t8" style="top:70.20px;font-size:16.3px;left:532.30px;transform:scaleX(0.9503);">Employment Status:</span>
<span class="t" id="t9" style="top:70.20px;font-size:16.3px;left:806.30px;transform:scaleX(0.9542);">Sort By:</span>
<span class="t" id="t10" style="top:70.20px;font-size:16.3px;left:1096.13px;transform:scaleX(0.9182);">Descending</span>
<span class="t" id="t11" style="top:128.40px;font-size:16.3px;left:30.84px;transform:scaleX(0.8979);">Previous BMS ID:</span>
<span class="t" id="t12" style="top:170.00px;font-size:16.3px;left:77.29px;transform:scaleX(0.9624);">Select All</span>
<span class="t" id="t13" style="top:170.00px;font-size:16.3px;left:293.81px;transform:scaleX(0.9460);">Send Year To Date values as Zero</span>
<span class="t" id="t14" style="top:70.03px;font-size:14.5px;left:136.86px;transform:scaleX(0.9741);">01/07/2021-30/06/2022</span>
<span class="t" id="t15" style="top:70.03px;font-size:14.5px;left:424.56px;transform:scaleX(0.9797);">28/02/2022</span>
<span class="t" id="t16" style="top:72.90px;font-size:14.3px;left:678.10px;transform:scaleX(0.9305);">All</span>
<span class="t" id="t17" style="top:71.70px;font-size:14.3px;left:871.90px;transform:scaleX(0.9298);">Code</span>
<span class="t" id="t18" style="top:130.93px;font-size:14.5px;left:806.71px;transform:scaleX(0.8998);">Clear All Previous Employee ID</span>
<span class="t" id="t19" style="top:727.93px;font-size:14.5px;left:519.37px;transform:scaleX(0.9586);"><u>S</u>end to ATO</span>
<span class="t" id="t20" style="top:727.93px;font-size:14.5px;left:655.40px;transform:scaleX(0.9234);">Exit : Esc</span>
<span class="t" id="t21" style="top:203.08px;font-size:14.2px;left:38.37px;transform:scaleX(0.9858);">Select</span>
<span class="t" id="t22" style="top:203.08px;font-size:14.2px;left:87.35px;font-weight:bold;transform:scaleX(1.0172);">Code</span>
<span class="t" id="t23" style="top:203.08px;font-size:14.2px;left:151.12px;transform:scaleX(0.9141);">Employee Name</span>
<span class="t" id="t24" style="top:203.08px;font-size:14.2px;left:299.99px;transform:scaleX(0.9477);">Alpha Code</span>
<span class="t" id="t25" style="top:203.08px;font-size:14.2px;left:385.20px;transform:scaleX(0.9436);">Number of Pays</span>
<span class="t" id="t26" style="top:203.08px;font-size:14.2px;left:488.61px;transform:scaleX(0.9262);">Emp. Status</span>
<span class="t" id="t27" style="top:203.08px;font-size:14.2px;left:568.39px;transform:scaleX(0.9546);">Start Date</span>
<span class="t" id="t28" style="top:203.08px;font-size:14.2px;left:643.41px;transform:scaleX(0.9277);">End Date</span>
<span class="t" id="t29" style="top:203.08px;font-size:14.2px;left:717.68px;transform:scaleX(0.9636);">Tax Scale</span>
<span class="t" id="t30" style="top:203.08px;font-size:14.2px;left:946.41px;transform:scaleX(0.9232);">Previous Employee ID</span>
<span class="t" id="t31" style="top:227.38px;font-size:14.2px;right:1084.06px;transform-origin:100% 0;color:#fff;">1</span>
<span class="t" id="t32" style="top:227.38px;font-size:14.2px;left:148.99px;color:#fff;transform:scaleX(0.9553);">Wallace, Edward James</span>
<span class="t" id="t33" style="top:227.38px;font-size:14.2px;left:299.40px;color:#fff;transform:scaleX(0.9420);">WALLACE</span>
<span class="t" id="t34" style="top:227.38px;font-size:14.2px;right:742.36px;transform-origin:100% 0;color:#fff;">5</span>
<span class="t" id="t35" style="top:227.38px;font-size:14.2px;left:489.98px;color:#fff;transform:scaleX(0.9655);">Current</span>
<span class="t" id="t36" style="top:227.38px;font-size:14.2px;left:570.59px;color:#fff;transform:scaleX(0.9488);">19/05/2004</span>
<span class="t" id="t37" style="top:227.38px;font-size:14.2px;left:644.74px;color:#fff;transform:scaleX(1.0251);">/&nbsp;&nbsp;/</span>
<span class="t" id="t38" style="top:227.38px;font-size:14.2px;left:719.40px;color:#fff;transform:scaleX(0.9330);">Standard Employee</span>
<span class="t" id="t39" style="top:252.38px;font-size:14.2px;right:1084.06px;transform-origin:100% 0;">2</span>
<span class="t" style="top:252.38px;font-size:14.2px;left:148.97px;width:146px;overflow:hidden;"><span class="t s" id="t40" style="position:static;display:inline-block;transform:scaleX(0.9790);">Andrews, Thomas  Harley</span></span>
<span class="t" id="t41" style="top:252.38px;font-size:14.2px;left:299.43px;transform:scaleX(0.8931);">ANDREWS</span>
<span class="t" id="t42" style="top:252.38px;font-size:14.2px;right:742.36px;transform-origin:100% 0;">5</span>
<span class="t" id="t43" style="top:252.38px;font-size:14.2px;left:489.98px;transform:scaleX(0.9655);">Current</span>
<span class="t" id="t44" style="top:252.38px;font-size:14.2px;left:570.59px;transform:scaleX(0.9488);">02/03/2009</span>
<span class="t" id="t45" style="top:252.38px;font-size:14.2px;left:644.74px;transform:scaleX(1.0251);">/&nbsp;&nbsp;/</span>
<span class="t" id="t46" style="top:252.38px;font-size:14.2px;left:719.40px;transform:scaleX(0.9330);">Standard Employee</span>
<span class="t" id="t47" style="top:277.38px;font-size:14.2px;right:1084.06px;transform-origin:100% 0;">3</span>
<span class="t" style="top:277.38px;font-size:14.2px;left:149.00px;width:146px;overflow:hidden;"><span class="t s" id="t48" style="position:static;display:inline-block;transform:scaleX(0.9380);">Houghton, Jannet   Faye</span></span>
<span class="t" id="t49" style="top:277.38px;font-size:14.2px;left:299.44px;transform:scaleX(0.8749);">HOUGHTON</span>
<span class="t" id="t50" style="top:277.38px;font-size:14.2px;right:742.36px;transform-origin:100% 0;">5</span>
<span class="t" id="t51" style="top:277.38px;font-size:14.2px;left:489.98px;transform:scaleX(0.9655);">Current</span>
<span class="t" id="t52" style="top:277.38px;font-size:14.2px;left:570.59px;transform:scaleX(0.9488);">26/04/2019</span>
<span class="t" id="t53" style="top:277.38px;font-size:14.2px;left:644.74px;transform:scaleX(1.0251);">/&nbsp;&nbsp;/</span>
<span class="t" id="t54" style="top:277.38px;font-size:14.2px;left:719.40px;transform:scaleX(0.9330);">Standard Employee</span>
<span class="t" id="t55" style="top:302.38px;font-size:14.2px;right:1084.06px;transform-origin:100% 0;">4</span>
<span class="t" id="t56" style="top:302.38px;font-size:14.2px;left:149.00px;transform:scaleX(0.9337);">Smith, Sandra  Olive</span>
<span class="t" id="t57" style="top:302.38px;font-size:14.2px;left:299.47px;transform:scaleX(0.8264);">SMITH</span>
<span class="t" id="t58" style="top:302.38px;font-size:14.2px;right:742.36px;transform-origin:100% 0;">5</span>
<span class="t" id="t59" style="top:302.38px;font-size:14.2px;left:489.98px;transform:scaleX(0.9655);">Current</span>
<span class="t" id="t60" style="top:302.38px;font-size:14.2px;left:570.59px;transform:scaleX(0.9488);">31/12/2013</span>
<span class="t" id="t61" style="top:302.38px;font-size:14.2px;left:644.74px;transform:scaleX(1.0251);">/&nbsp;&nbsp;/</span>
<span class="t" id="t62" style="top:302.38px;font-size:14.2px;left:719.40px;transform:scaleX(0.9330);">Standard Employee</span>
<span class="t" id="t63" style="top:327.38px;font-size:14.2px;right:1084.06px;transform-origin:100% 0;">5</span>
<span class="t" id="t64" style="top:327.38px;font-size:14.2px;left:148.99px;transform:scaleX(0.9575);">Keating, Karl Adrian</span>
<span class="t" id="t65" style="top:327.38px;font-size:14.2px;left:299.43px;transform:scaleX(0.8913);">KEATING</span>
<span class="t" id="t66" style="top:327.38px;font-size:14.2px;right:742.36px;transform-origin:100% 0;">5</span>
<span class="t" id="t67" style="top:327.38px;font-size:14.2px;left:489.98px;transform:scaleX(0.9655);">Current</span>
<span class="t" id="t68" style="top:327.38px;font-size:14.2px;left:570.59px;transform:scaleX(0.9488);">09/04/2019</span>
<span class="t" id="t69" style="top:327.38px;font-size:14.2px;left:644.74px;transform:scaleX(1.0251);">/&nbsp;&nbsp;/</span>
<span class="t" id="t70" style="top:327.38px;font-size:14.2px;left:719.40px;transform:scaleX(0.9330);">Standard Employee</span>
<span class="t" id="t71" style="top:352.38px;font-size:14.2px;right:1084.06px;transform-origin:100% 0;">6</span>
<span class="t" id="t72" style="top:352.38px;font-size:14.2px;left:149.00px;transform:scaleX(0.9437);">Russel, George Thomas</span>
<span class="t" id="t73" style="top:352.38px;font-size:14.2px;left:299.44px;transform:scaleX(0.8714);">RUSSEL</span>
<span class="t" id="t74" style="top:352.38px;font-size:14.2px;right:742.36px;transform-origin:100% 0;">5</span>
<span class="t" id="t75" style="top:352.38px;font-size:14.2px;left:489.98px;transform:scaleX(0.9655);">Current</span>
<span class="t" id="t76" style="top:352.38px;font-size:14.2px;left:570.59px;transform:scaleX(0.9488);">02/07/2020</span>
<span class="t" id="t77" style="top:352.38px;font-size:14.2px;left:644.74px;transform:scaleX(1.0251);">/&nbsp;&nbsp;/</span>
<span class="t" id="t78" style="top:352.38px;font-size:14.2px;left:719.40px;transform:scaleX(0.9330);">Standard Employee</span>
<span class="t" id="t79" style="top:377.38px;font-size:14.2px;right:1084.06px;transform-origin:100% 0;">7</span>
<span class="t" style="top:377.38px;font-size:14.2px;left:149.00px;width:146px;overflow:hidden;"><span class="t s" id="t80" style="position:static;display:inline-block;transform:scaleX(0.9380);">Robinson, Henry Karuso</span></span>
<span class="t" id="t81" style="top:377.38px;font-size:14.2px;left:299.45px;transform:scaleX(0.8638);">ROBINSON</span>
<span class="t" id="t82" style="top:377.38px;font-size:14.2px;right:742.36px;transform-origin:100% 0;">5</span>
<span class="t" id="t83" style="top:377.38px;font-size:14.2px;left:489.98px;transform:scaleX(0.9655);">Current</span>
<span class="t" id="t84" style="top:377.38px;font-size:14.2px;left:570.59px;transform:scaleX(0.9488);">29/04/2016</span>
<span class="t" id="t85" style="top:377.38px;font-size:14.2px;left:644.74px;transform:scaleX(1.0251);">/&nbsp;&nbsp;/</span>
<span class="t" id="t86" style="top:377.38px;font-size:14.2px;left:719.40px;transform:scaleX(0.9330);">Standard Employee</span>
<span class="t" id="t87" style="top:402.38px;font-size:14.2px;right:1084.06px;transform-origin:100% 0;">8</span>
<span class="t" id="t88" style="top:402.38px;font-size:14.2px;left:148.99px;transform:scaleX(0.9511);">Hillary, Matthew  Martin</span>
<span class="t" id="t89" style="top:402.38px;font-size:14.2px;left:299.41px;transform:scaleX(0.9200);">HILLARY</span>
<span class="t" id="t90" style="top:402.38px;font-size:14.2px;right:742.36px;transform-origin:100% 0;">5</span>
<span class="t" id="t91" style="top:402.38px;font-size:14.2px;left:489.98px;transform:scaleX(0.9655);">Current</span>
<span class="t" id="t92" style="top:402.38px;font-size:14.2px;left:570.59px;transform:scaleX(0.9488);">28/06/2015</span>
<span class="t" id="t93" style="top:402.38px;font-size:14.2px;left:644.74px;transform:scaleX(1.0251);">/&nbsp;&nbsp;/</span>
<span class="t" id="t94" style="top:402.38px;font-size:14.2px;left:719.40px;transform:scaleX(0.9330);">Standard Employee</span>
<span class="t" id="t95" style="top:427.38px;font-size:14.2px;right:1084.06px;transform-origin:100% 0;">9</span>
<span class="t" style="top:427.38px;font-size:14.2px;left:149.01px;width:146px;overflow:hidden;"><span class="t s" id="t96" style="position:static;display:inline-block;transform:scaleX(0.9190);">Jackson, William Duncan</span></span>
<span class="t" id="t97" style="top:427.38px;font-size:14.2px;left:299.42px;transform:scaleX(0.9084);">JACKSON</span>
<span class="t" id="t98" style="top:427.38px;font-size:14.2px;right:742.36px;transform-origin:100% 0;">5</span>
<span class="t" id="t99" style="top:427.38px;font-size:14.2px;left:489.98px;transform:scaleX(0.9655);">Current</span>
<span class="t" id="t100" style="top:427.38px;font-size:14.2px;left:570.59px;transform:scaleX(0.9488);">07/05/2019</span>
<span class="t" id="t101" style="top:427.38px;font-size:14.2px;left:644.74px;transform:scaleX(1.0251);">/&nbsp;&nbsp;/</span>
<span class="t" id="t102" style="top:427.38px;font-size:14.2px;left:719.40px;transform:scaleX(0.9330);">Standard Employee</span>
<span class="t" id="t103" style="top:452.38px;font-size:14.2px;right:1084.06px;transform-origin:100% 0;">20</span>
<span class="t" id="t104" style="top:452.38px;font-size:14.2px;left:148.98px;transform:scaleX(0.9651);">Tate, Bernard Cedric</span>
<span class="t" id="t105" style="top:452.38px;font-size:14.2px;left:299.40px;transform:scaleX(0.9421);">TATE</span>
<span class="t" id="t106" style="top:452.38px;font-size:14.2px;right:742.36px;transform-origin:100% 0;">5</span>
<span class="t" id="t107" style="top:452.38px;font-size:14.2px;left:489.98px;transform:scaleX(0.9655);">Current</span>
<span class="t" id="t108" style="top:452.38px;font-size:14.2px;left:570.59px;transform:scaleX(0.9488);">23/09/2008</span>
<span class="t" id="t109" style="top:452.38px;font-size:14.2px;left:644.74px;transform:scaleX(1.0251);">/&nbsp;&nbsp;/</span>
<span class="t" id="t110" style="top:452.38px;font-size:14.2px;left:719.40px;transform:scaleX(0.9330);">Standard Employee</span>
<span class="t" id="t111" style="top:477.38px;font-size:14.2px;right:1084.06px;transform-origin:100% 0;">21</span>
<span class="t" id="t112" style="top:477.38px;font-size:14.2px;left:148.99px;transform:scaleX(0.9491);">Giles, Harrison  Relf</span>
<span class="t" id="t113" style="top:477.38px;font-size:14.2px;left:299.45px;transform:scaleX(0.8584);">GILES</span>
<span class="t" id="t114" style="top:477.38px;font-size:14.2px;right:742.36px;transform-origin:100% 0;">5</span>
<span class="t" id="t115" style="top:477.38px;font-size:14.2px;left:489.98px;transform:scaleX(0.9655);">Current</span>
<span class="t" id="t116" style="top:477.38px;font-size:14.2px;left:570.59px;transform:scaleX(0.9488);">26/04/2019</span>
<span class="t" id="t117" style="top:477.38px;font-size:14.2px;left:644.74px;transform:scaleX(1.0251);">/&nbsp;&nbsp;/</span>
<span class="t" id="t118" style="top:477.38px;font-size:14.2px;left:719.40px;transform:scaleX(0.9330);">Standard Employee</span>
<span class="t" id="t119" style="top:502.38px;font-size:14.2px;right:1084.06px;transform-origin:100% 0;">22</span>
<span class="t" id="t120" style="top:502.38px;font-size:14.2px;left:148.98px;transform:scaleX(0.9630);">Watson, Judy May</span>
<span class="t" id="t121" style="top:502.38px;font-size:14.2px;left:299.40px;transform:scaleX(0.9372);">WATSON</span>
<span class="t" id="t122" style="top:502.38px;font-size:14.2px;right:742.36px;transform-origin:100% 0;">5</span>
<span class="t" id="t123" style="top:502.38px;font-size:14.2px;left:489.98px;transform:scaleX(0.9655);">Current</span>
<span class="t" id="t124" style="top:502.38px;font-size:14.2px;left:570.59px;transform:scaleX(0.9488);">03/06/2017</span>
<span class="t" id="t125" style="top:502.38px;font-size:14.2px;left:644.74px;transform:scaleX(1.0251);">/&nbsp;&nbsp;/</span>
<span class="t" id="t126" style="top:502.38px;font-size:14.2px;left:719.40px;transform:scaleX(0.9330);">Standard Employee</span>

</body></html>
